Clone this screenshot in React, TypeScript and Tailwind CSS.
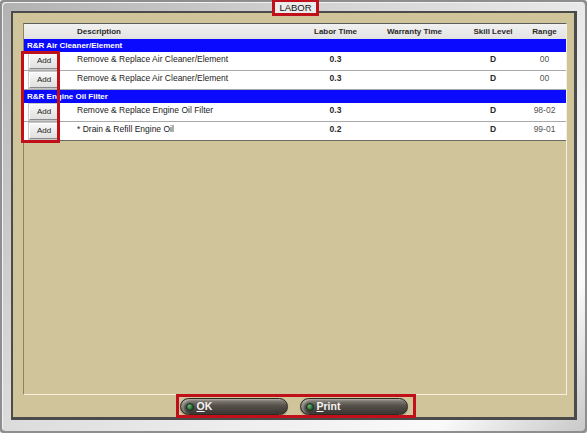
import React from "react";

type Row =
  | { kind: "group"; title: string }
  | { kind: "item"; desc: string; labor: string; skill: string; range: string };

const rows: Row[] = [
  { kind: "group", title: "R&R Air Cleaner/Element" },
  { kind: "item", desc: "Remove & Replace Air Cleaner/Element", labor: "0.3", skill: "D", range: "00" },
  { kind: "item", desc: "Remove & Replace Air Cleaner/Element", labor: "0.3", skill: "D", range: "00" },
  { kind: "group", title: "R&R Engine Oil Filter" },
  { kind: "item", desc: "Remove & Replace Engine Oil Filter", labor: "0.3", skill: "D", range: "98-02" },
  { kind: "item", desc: "* Drain & Refill Engine Oil", labor: "0.2", skill: "D", range: "99-01" },
];

const cols = "grid grid-cols-[53px_228px_61px_97px_60px_43px]";

function PillButton({ first, rest }: { first: string; rest: string }) {
  return (
    <div className="flex h-[17px] w-[108px] items-center rounded-full border border-[#2e2a25] bg-[linear-gradient(to_bottom,#8d887f,#55504a_45%,#3a3631)] shadow-[inset_3px_1px_2px_rgba(255,255,255,0.35),0_1px_1px_rgba(0,0,0,0.3)]">
      <div className="ml-[5px] h-[8px] w-[8px] rounded-full border border-[#18311d] bg-[radial-gradient(circle_at_35%_35%,#6fb47a,#2a6a36_60%,#173d1e)]" />
      <span className="ml-[3px] text-[10.5px] font-bold leading-none text-[#f4f4f4]">
        <span className="underline">{first}</span>
        {rest}
      </span>
    </div>
  );
}

export default function App() {
  return (
    <div className="relative h-[433px] w-[587px] overflow-hidden font-['Liberation_Sans',Arial,sans-serif]">
      <div className="h-full w-full rounded-[3px] bg-[#8e8e8e] p-[2px]">
        <div className="h-full w-full rounded-[4px] bg-[linear-gradient(135deg,#b2b2b2_0%,#d6d6d6_35%,#eeeeee_65%,#fafafa_85%,#c9c9c9_100%)] pb-[11px] pl-[9px] pr-[8px] pt-[9px] shadow-[inset_1px_1px_0_#f2f2f2]">
          <div className="flex h-full w-full flex-col border-[2px] border-b-[3px] border-r-[3px] border-[#4b4b4b] bg-[#d0c49b]">
            <div className="ml-[10px] mt-[10px] h-[372px] w-[544px] border border-b-[#f7f0dc] border-l-[#8e8566] border-r-[#f7f0dc] border-t-[#5e5e5e]">
              <div className="w-[542px] bg-white text-[#1a1a1a]">
                <div className={`${cols} h-[15px] items-center bg-[linear-gradient(to_bottom,#f1f1f1,#e2e2e2)] text-[8px] font-bold text-[#2a2a2a]`}>
                  <div />
                  <div>Description</div>
                  <div className="text-center">Labor Time</div>
                  <div className="text-center">Warranty Time</div>
                  <div className="text-center">Skill Level</div>
                  <div className="text-center">Range</div>
                </div>
                {rows.map((r, i) =>
                  r.kind === "group" ? (
                    <div
                      key={i}
                      className="flex h-[13px] items-center bg-[#0a0aff] pl-[3px] text-[8px] font-bold text-white"
                    >
                      {r.title}
                    </div>
                  ) : (
                    <div
                      key={i}
                      className={`${cols} h-[19px] border-b ${i === rows.length - 1 ? "border-[#6a6a6a]" : "border-[#a9a9a9]"}`}
                    >
                      <div className="pl-[5px] pt-[1px]">
                        <div className="flex h-[16px] w-[30px] items-center justify-center border border-b-[#8a8a8a] border-l-[#ffffff] border-r-[#8a8a8a] border-t-[#ffffff] bg-[linear-gradient(to_bottom,#f7f7f7,#e0e0e0)] text-[8px] leading-none text-[#222] shadow-[0_0_0_1px_#c8c8c8]">
                          Add
                        </div>
                      </div>
                      <div className="pt-[2px] text-[8.5px] leading-[11px] text-[#222]">{r.desc}</div>
                      <div className="pt-[2px] text-center text-[8.5px] font-bold leading-[11px] text-[#2a2a2a]">{r.labor}</div>
                      <div />
                      <div className="pt-[2px] text-center text-[8.5px] font-bold leading-[11px] text-[#2a2a2a]">{r.skill}</div>
                      <div className="pt-[2px] text-center text-[8.5px] leading-[11px] text-[#555]">{r.range}</div>
                    </div>
                  )
                )}
              </div>
            </div>
            <div className="flex flex-1 items-start justify-center gap-[12px] pt-[3px]">
              <PillButton first="O" rest="K" />
              <PillButton first="P" rest="rint" />
            </div>
          </div>
        </div>
      </div>

      <div className="absolute left-[272px] top-[-1px] flex h-[17px] w-[47px] items-center justify-center border-[3px] border-[#c0101a] bg-[#ececec] pt-[1px] text-[9.5px] leading-none text-[#111]">
        LABOR
      </div>
      <div className="pointer-events-none absolute left-[21px] top-[51px] h-[92px] w-[39px] border-[3px] border-[#c0101a]" />
      <div className="pointer-events-none absolute left-[176px] top-[394px] h-[24px] w-[240px] border-[3px] border-[#c0101a]" />
    </div>
  );
}
